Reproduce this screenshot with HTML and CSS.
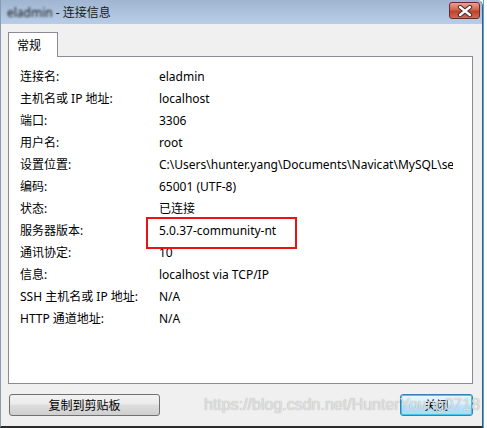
FILE: index.html
```html
<!DOCTYPE html>
<html>
<head>
<meta charset="utf-8">
<link rel="stylesheet" href="styles.css">
</head>
<body>
<div class="screen">
  <div class="window">
    <div class="titlebar">
      <div class="title"><span class="blur">eladmin</span> - 连接信息</div>
      <div class="closebtn">
        <svg width="18" height="12" viewBox="0 0 18 12">
          <path d="M4 2 L14 10 M14 2 L4 10" stroke="#3a2a30" stroke-width="4.2" stroke-linecap="round"/>
          <path d="M4 2 L14 10 M14 2 L4 10" stroke="#ffffff" stroke-width="2.4" stroke-linecap="round"/>
        </svg>
      </div>
    </div>
    <div class="body">
      <div class="tabs"><div class="tab">常规</div></div>
      <div class="panel">
        <div class="grid">
          <div class="lbl">连接名:</div><div class="val">eladmin</div>
          <div class="lbl">主机名或 IP 地址:</div><div class="val">localhost</div>
          <div class="lbl">端口:</div><div class="val">3306</div>
          <div class="lbl">用户名:</div><div class="val">root</div>
          <div class="lbl">设置位置:</div><div class="val clip">C:\Users\hunter.yang\Documents\Navicat\MySQL\servers\eladmin</div>
          <div class="lbl">编码:</div><div class="val">65001 (UTF-8)</div>
          <div class="lbl">状态:</div><div class="val">已连接</div>
          <div class="lbl">服务器版本:</div><div class="val"><span class="hl">5.0.37-community-nt</span></div>
          <div class="lbl">通讯协定:</div><div class="val">10</div>
          <div class="lbl">信息:</div><div class="val">localhost via TCP/IP</div>
          <div class="lbl">SSH 主机名或 IP 地址:</div><div class="val">N/A</div>
          <div class="lbl">HTTP 通道地址:</div><div class="val">N/A</div>
        </div>
      </div>
      <div class="buttons">
        <div class="btn copy">复制到剪贴板</div>
        <div class="btn close">关闭</div>
      </div>
    </div>
    <div class="watermark">https://blog.csdn.net/HunterYoung0718</div>
  </div>
  <div class="edge"></div>
</div>
</body>
</html>
```
FILE: styles.css
```css
html, body {
  margin: 0;
  padding: 0;
  width: 487px;
  height: 428px;
  overflow: hidden;
  background: #ffffff;
}
.screen {
  display: flex;
  width: 487px;
  height: 428px;
  font-family: "Noto Sans", "Noto Sans CJK SC", sans-serif;
  font-size: 12px;
  color: #000;
}
.window {
  position: relative;
  width: 482px;
  height: 426px;
  border-left: 1px solid #8a9bb0;
  border-bottom: 2px solid #2b2b2b;
  border-right: 1px solid #4a5a6a;
  border-top-right-radius: 6px;
  display: flex;
  flex-direction: column;
  background: #f0f0f0;
  overflow: hidden;
}
.edge {
  width: 3px;
  height: 428px;
  border-left: 1px solid #48a9e6;
  background: #fdfdfd;
}
.titlebar {
  height: 24px;
  flex: none;
  display: flex;
  align-items: center;
  justify-content: space-between;
  background: linear-gradient(#9fb5d1, #b8cee8);
  padding: 0 2px 0 6px;
}
.title {
  font-size: 12px;
  color: #1a1a1a;
  padding-bottom: 1px;
}
.blur {
  filter: blur(0.9px);
}
.closebtn {
  width: 29px;
  height: 15px;
  margin-top: -3px;
  border: 1px solid #6b2a28;
  border-radius: 3px;
  background: linear-gradient(#e9a290 0%, #d2644e 45%, #c0412b 55%, #d46a4f 100%);
  display: flex;
  align-items: center;
  justify-content: center;
}
.body {
  flex: 1;
  display: flex;
  flex-direction: column;
  padding: 8px 9px 0 7px;
}
.tabs {
  display: flex;
  height: 24px;
}
.tab {
  width: 50px;
  height: 25px;
  box-sizing: border-box;
  border: 1px solid #898c95;
  border-bottom: none;
  background: #ffffff;
  padding: 3px 0 0 8px;
  position: relative;
  z-index: 1;
}
.panel {
  height: 328px;
  box-sizing: border-box;
  border: 1px solid #898c95;
  background: #ffffff;
  padding: 9px 0 0 11px;
}
.grid {
  display: grid;
  grid-template-columns: 139px 294px;
  grid-auto-rows: 22px;
}
.lbl, .val {
  line-height: 22px;
  white-space: nowrap;
}
.clip {
  overflow: hidden;
  text-overflow: clip;
}
.hl {
  position: relative;
}
.hl::after {
  content: "";
  position: absolute;
  left: -13px;
  top: -5px;
  width: 147px;
  height: 28px;
  border: 2px solid #ee1111;
}
.buttons {
  display: flex;
  justify-content: space-between;
  margin-top: 10px;
  padding-left: 1px;
}
.btn {
  height: 22px;
  box-sizing: border-box;
  border: 1px solid #707070;
  border-radius: 3px;
  background: linear-gradient(#f2f2f2 0%, #ebebeb 45%, #dddddd 50%, #cfcfcf 100%);
  display: flex;
  align-items: center;
  justify-content: center;
}
.copy {
  width: 151px;
}
.close {
  width: 73px;
  border-color: #3c7fb1;
  box-shadow: inset 0 0 0 1px #48c4f0;
  background: linear-gradient(#eaf6fd 0%, #d9f0fc 45%, #bee6fd 50%, #a7d9f5 100%);
}
.watermark {
  position: absolute;
  z-index: 5;
  left: 203px;
  top: 396px;
  font-family: "Liberation Sans", Arial, sans-serif;
  font-size: 16px;
  color: rgba(235, 235, 235, 0.85);
  text-shadow: 0 0 1px rgba(120, 120, 120, 0.7);
  white-space: nowrap;
  pointer-events: none;
}
```
